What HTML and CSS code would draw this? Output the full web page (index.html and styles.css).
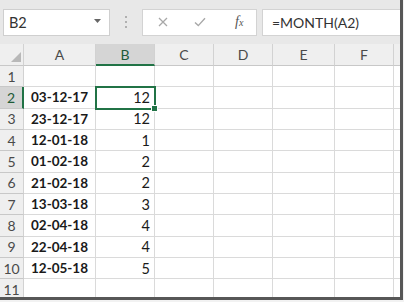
FILE: index.html
```html
<!DOCTYPE html>
<html lang="en">
<head>
    <meta charset="UTF-8">
    <title>MONTH</title>
    <link rel="stylesheet" href="styles.css">
</head>
<body>
    <div class="window">
        <div class="toolbar">
            <div class="name-box">
                <span>B2</span>
                <svg class="drop" width="7" height="4" viewBox="0 0 7 4"><path d="M0 0H7L3.5 4Z" fill="#666"/></svg>
            </div>
            <div class="dots"><i></i><i></i><i></i></div>
            <div class="buttons">
                <svg width="10" height="10" viewBox="0 0 10 10"><path d="M1 1L9 9M9 1L1 9" stroke="#a8a8a8" stroke-width="1.3" fill="none"/></svg>
                <svg width="12" height="10" viewBox="0 0 12 10"><path d="M1 5.5L4.3 8.6L11 1.2" stroke="#a8a8a8" stroke-width="1.4" fill="none"/></svg>
                <span class="fx">f<small>x</small></span>
            </div>
            <div class="formula">=MONTH(A2)</div>
        </div>
        <div class="grid">
            <div class="corner"><svg width="10" height="10" viewBox="0 0 10 10"><path d="M10 0V10H0Z" fill="#b8b8b8"/></svg></div>
            <div class="col-head">A</div>
            <div class="col-head sel">B</div>
            <div class="col-head">C</div>
            <div class="col-head">D</div>
            <div class="col-head">E</div>
            <div class="col-head">F</div>
            <div class="col-head"></div>

            <div class="row-head">1</div>
            <div class="cell"></div><div class="cell"></div><div class="cell"></div><div class="cell"></div><div class="cell"></div><div class="cell"></div><div class="cell"></div>

            <div class="row-head sel">2</div>
            <div class="cell date">03-12-17</div><div class="cell num active">12</div><div class="cell"></div><div class="cell"></div><div class="cell"></div><div class="cell"></div><div class="cell"></div>

            <div class="row-head">3</div>
            <div class="cell date">23-12-17</div><div class="cell num">12</div><div class="cell"></div><div class="cell"></div><div class="cell"></div><div class="cell"></div><div class="cell"></div>

            <div class="row-head">4</div>
            <div class="cell date">12-01-18</div><div class="cell num">1</div><div class="cell"></div><div class="cell"></div><div class="cell"></div><div class="cell"></div><div class="cell"></div>

            <div class="row-head">5</div>
            <div class="cell date">01-02-18</div><div class="cell num">2</div><div class="cell"></div><div class="cell"></div><div class="cell"></div><div class="cell"></div><div class="cell"></div>

            <div class="row-head">6</div>
            <div class="cell date">21-02-18</div><div class="cell num">2</div><div class="cell"></div><div class="cell"></div><div class="cell"></div><div class="cell"></div><div class="cell"></div>

            <div class="row-head">7</div>
            <div class="cell date">13-03-18</div><div class="cell num">3</div><div class="cell"></div><div class="cell"></div><div class="cell"></div><div class="cell"></div><div class="cell"></div>

            <div class="row-head">8</div>
            <div class="cell date">02-04-18</div><div class="cell num">4</div><div class="cell"></div><div class="cell"></div><div class="cell"></div><div class="cell"></div><div class="cell"></div>

            <div class="row-head">9</div>
            <div class="cell date">22-04-18</div><div class="cell num">4</div><div class="cell"></div><div class="cell"></div><div class="cell"></div><div class="cell"></div><div class="cell"></div>

            <div class="row-head">10</div>
            <div class="cell date">12-05-18</div><div class="cell num">5</div><div class="cell"></div><div class="cell"></div><div class="cell"></div><div class="cell"></div><div class="cell"></div>

            <div class="row-head">11</div>
            <div class="cell"></div><div class="cell"></div><div class="cell"></div><div class="cell"></div><div class="cell"></div><div class="cell"></div><div class="cell"></div>
        </div>
    </div>
</body>
</html>
```

FILE: styles.css
```css
*{
    margin: 0;
    padding: 0;
    box-sizing: border-box;
}
body{
    background: #f2f2f2;
    font-family: Lato, "Liberation Sans", sans-serif;
    color: #1a1a1a;
}
.window{
    width: 403px;
    height: 300px;
    overflow: hidden;
    background: #fff;
    border-right: 3px solid #575757;
    border-bottom: 3px solid #575757;
}
.toolbar{
    height: 44px;
    background: #e8e8e8;
    display: flex;
    align-items: center;
    padding-left: 3px;
}
.name-box{
    width: 107px;
    height: 27px;
    background: #fff;
    border: 1px solid #cfcfcf;
    display: flex;
    align-items: center;
    justify-content: space-between;
    padding: 0 8px 0 5px;
    font-size: 14.5px;
    color: #333;
}
.drop{
    margin-top: -3px;
}
.dots{
    width: 32px;
    display: flex;
    flex-direction: column;
    align-items: center;
    gap: 3px;
}
.dots i{
    width: 2px;
    height: 2px;
    background: #b0b0b0;
}
.buttons{
    width: 115px;
    height: 27px;
    background: #fff;
    border: 1px solid #d3d3d3;
    display: flex;
    align-items: center;
    padding-left: 15px;
    gap: 26px;
}
.fx{
    font-family: "Liberation Serif", serif;
    font-style: italic;
    font-size: 14px;
    color: #555;
    margin-left: 3px;
}
.fx small{
    font-size: 10px;
}
.formula{
    flex: 1;
    height: 27px;
    margin-left: 5px;
    background: #fff;
    border: 1px solid #d3d3d3;
    border-right: 0;
    display: flex;
    align-items: center;
    padding-left: 9px;
    font-size: 14px;
    color: #333;
}
.grid{
    display: grid;
    grid-template-columns: 24px 72px 59px 59px 59px 62px 59px 7px;
    grid-template-rows: 22px repeat(11, 21.33px);
}
.corner, .col-head, .row-head{
    background: #efefef;
    color: #4a4a4a;
    font-size: 14px;
    display: flex;
    align-items: center;
    justify-content: center;
    border-right: 1px solid #d2d2d2;
    border-bottom: 1px solid #c8c8c8;
}
.corner{
    align-items: flex-end;
    justify-content: flex-end;
    padding: 0 2px 3px 0;
}
.col-head.sel{
    background: #d5d5d5;
    border-bottom: 2px solid #217346;
    color: #1e5b38;
}
.row-head.sel{
    background: #d5d5d5;
    border-right: 2px solid #217346;
    color: #1e5b38;
}
.cell{
    border-right: 1px solid #dadada;
    border-bottom: 1px solid #dadada;
    font-size: 14.5px;
    display: flex;
    align-items: center;
}
.date{
    font-weight: bold;
    font-size: 13.5px;
    justify-content: center;
}
.num{
    justify-content: flex-end;
    padding-right: 4px;
}
.active{
    position: relative;
    z-index: 1;
    outline: 2px solid #217346;
    outline-offset: -1px;
}
.active::after{
    content: "";
    position: absolute;
    right: -4px;
    bottom: -4px;
    width: 5px;
    height: 5px;
    background: #217346;
    border: 1px solid #fff;
}
```
